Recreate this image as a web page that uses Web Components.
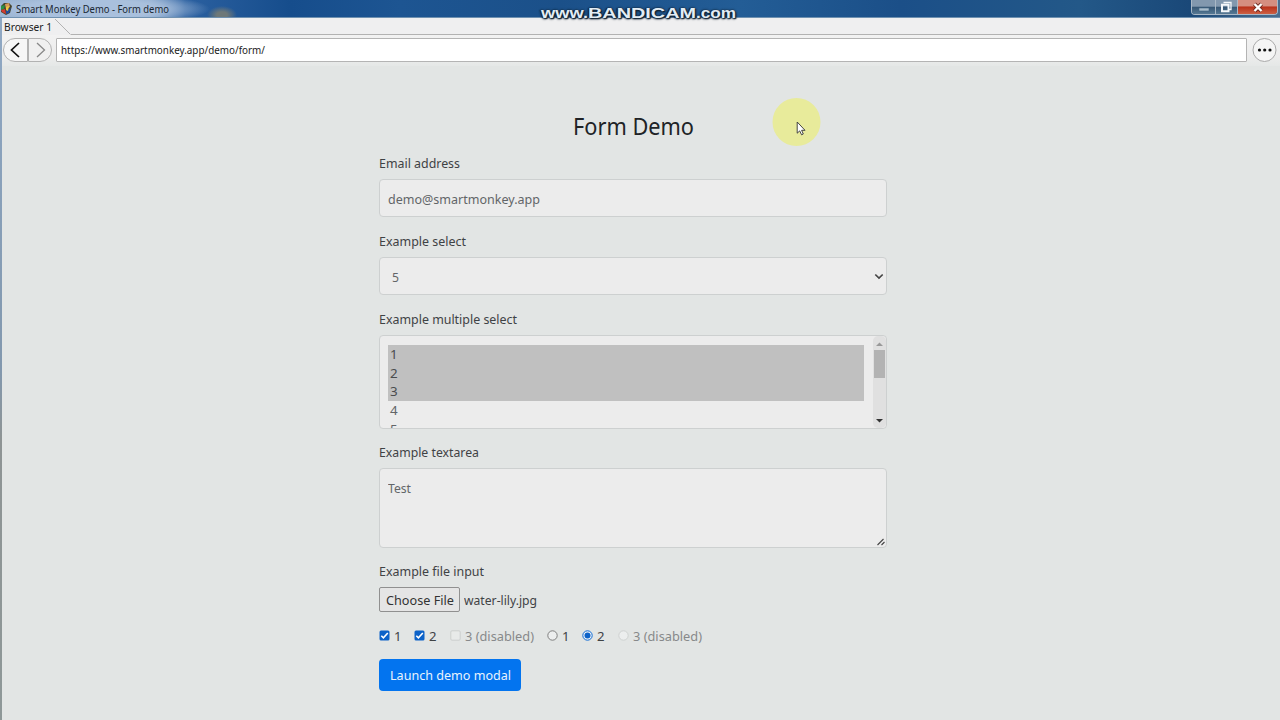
<!DOCTYPE html>
<html lang="en"><head><meta charset="utf-8"><title>Smart Monkey Demo - Form demo</title>
<style>html,body{margin:0;width:1280px;height:720px;overflow:hidden;background:#e2e5e4;font-family:"Noto Sans","Open Sans",sans-serif}</style>
</head><body><demo-window></demo-window>
<script>
const define=(name,html,setup)=>customElements.define(name,class extends HTMLElement{
  constructor(){super();this.attachShadow({mode:'open'}).innerHTML=html}
  connectedCallback(){if(setup)setup(this,this.shadowRoot)}
});
// A single line of text condensed or widened to the width given in "w".
define('fit-text',`<style>:host{display:inline-block;white-space:nowrap;flex:none}span{display:inline-block;transform-origin:0 50%}</style><span><slot></slot></span>`,(h,r)=>{
  const s=r.querySelector('span'),w=+h.getAttribute('w');
  h.style.width=w+'px';
  s.style.transform='scaleX('+w/s.getBoundingClientRect().width+')';
});
define('title-bar',`<style>
:host{display:flex;height:18px;box-sizing:border-box;border-bottom:1px solid #6f91b0;position:relative;overflow:visible;
background:radial-gradient(ellipse 15px 9px at 222px 15px,#6e7878 0 35%,#6e787800),radial-gradient(ellipse 120px 17px at 90px 9px,#a9c0dd 0 55%,#a9c0dd00),linear-gradient(90deg,#96b0cd 0,#88a6cb 150px,#2b60a0 185px,#164d8c 290px,#1d5592 400px,#1b5089 560px,#235d96 740px,#1b4f88 900px,#235888 1080px,#1a4878 1190px,#4b6e8e 1280px)}
.left{display:flex;align-items:center;height:17px;gap:4px;color:#1a2733;font-size:10.3px;line-height:17px;flex:1}
.left fit-text{padding-top:1px}
.btns{display:flex;height:15px;margin-right:2px;border:1px solid #a9b8c6;border-top:0;border-radius:0 0 4px 4px;overflow:hidden;box-sizing:border-box}
.b{display:flex;align-items:center;justify-content:center;background:linear-gradient(#8298ae 0 45%,#355674 50%,#577994);border-right:1px solid #a9b8c6}
.c{background:linear-gradient(#d58e80 0 42%,#ba321b 50%,#cc6044);border:0}
.wm{position:absolute;left:541px;top:3px;display:flex;align-items:baseline;font:bold 14px/20px "Liberation Sans",sans-serif;color:#e2edf5;text-shadow:0 0 2px #132536,1px 1px 1px #132536,-1px 0 1px #132536,0 1px 2px #132536}
.wm .big{font-size:15.5px}
</style>
<div class="left"><svg width="12" height="15" viewBox="0 0 12 15"><path d="M1 5 4 2 9 2 12 5 10 12 6 14 1 11Z" fill="#48442c"/><path d="M5 3 9 2 10 6 6 8Z" fill="#d69b57"/><path d="M1 5 5 4 4 8 1 9Z" fill="#299246"/><path d="M1 9 5 8 6 13 2 11Z" fill="#d33a31"/><path d="M6 9 11 7 9 12 6 13Z" fill="#214c9c"/><path d="M6 6 9 5 8 10 6 9Z" fill="#ecc843"/></svg><fit-text w="153">Smart Monkey Demo - Form demo</fit-text></div>
<div class="wm"><fit-text w="47">www.</fit-text><fit-text class="big" w="108">BANDICAM</fit-text><fit-text w="40">.com</fit-text></div>
<div class="btns"><div class="b" style="width:23px"><svg width="12" height="14"><rect x="1" y="8" width="10" height="3" fill="#a9bccb" stroke="#426483" stroke-width=".6"/></svg></div>
<div class="b" style="width:21px"><svg width="13" height="14" viewBox="0 0 13 14"><path d="M3.5 2.5h7.5v7h-2" fill="none" stroke="#f4f7fa" stroke-width="1.3"/><path d="M2 4.8h6.5v6.5h-6.5z" fill="none" stroke="#f4f7fa" stroke-width="2"/></svg></div>
<div class="b c" style="width:39px"><svg width="12" height="14" viewBox="0 0 12 14"><path d="M2.5 4 9.5 11M9.5 4 2.5 11" stroke="#6e2b21" stroke-width="4"/><path d="M2.5 4 9.5 11M9.5 4 2.5 11" stroke="#fff" stroke-width="2.4"/></svg></div></div>`);
define('tab-strip',`<style>:host{display:flex;height:17px;background:#efeff0;color:#202020;font-size:10.3px;line-height:18px}
fit-text{margin-left:2px}svg{margin-left:3px}.line{flex:1;border-bottom:1px solid #b2b2b2;height:16px}</style>
<fit-text w="48"><slot></slot></fit-text><svg width="16" height="17"><path d="M0 1 L15.5 16.5" stroke="#b2b2b2" fill="none"/></svg><div class="line"></div>`);
define('nav-bar',`<style>:host{display:flex;align-items:center;height:31px;padding:0 3px 1px 0;box-sizing:border-box;background:linear-gradient(#f2f2f2,#ececec 70%,#e5e8e7)}
.url{flex:1;height:24px;box-sizing:border-box;border:1px solid #b4b4b4;border-radius:1px;background:#fff;margin:0 5px 0 3px;padding-left:4px;font-size:10.4px;line-height:22px;color:#202020}svg{display:block;flex:none}</style>
<svg width="51" height="26" viewBox="0 0 51 26"><path d="M25.5 1.5H13a11.5 11.5 0 0 0 0 23H25.5Z" fill="#f6f6f6" stroke="#b2b2b2"/><path d="M26.5 1.5H38a11.5 11.5 0 0 1 0 23H26.5Z" fill="#f0f0f0" stroke="#b2b2b2"/><path d="M17 6 9.5 13 17 20" fill="none" stroke="#111" stroke-width="1.7"/><path d="M35 6 42.5 13 35 20" fill="none" stroke="#888" stroke-width="1.3"/></svg>
<div class="url"><fit-text w="204"><slot></slot></fit-text></div>
<svg width="25" height="26" viewBox="0 0 25 26"><circle cx="12.5" cy="13" r="11.5" fill="#f5f5f5" stroke="#aaa"/><g fill="#111"><circle cx="7.5" cy="13" r="1.6"/><circle cx="12.7" cy="13" r="1.6"/><circle cx="18" cy="13" r="1.6"/></g></svg>`);
define('form-group',`<style>:host{display:block;margin-bottom:12px}.l{height:24px;line-height:25px;font-size:13.4px;color:#3f4244;margin-bottom:4px;display:flex}</style><div class="l"><slot name="label"></slot></div><slot></slot>`);
define('form-box',`<style>:host{display:flex;box-sizing:border-box;width:508px;height:38px;border:1px solid #cdd0d0;border-radius:4px;background:#ececec;font-size:13.4px;color:#626568;overflow:hidden}</style><slot></slot>`);
define('option-list',`<style>:host{display:flex;width:100%}.o{width:476px;margin:9px 9px 0 8px;line-height:19.6px;flex:none}.s{background:#c0c0c0;color:#4a4c4e}.o div{height:18.66px;padding-left:2px}
.bar{width:13px;height:92px;background:#e0e0e0;border-radius:5px;display:flex;flex-direction:column;align-items:center}.th{width:11px;height:28px;background:#b3b3b3}svg{display:block}</style>
<div class="o"><div class="s">1</div><div class="s">2</div><div class="s">3</div><div>4</div><div>5</div></div>
<div class="bar"><svg width="13" height="14"><path d="M3 10h7L6.5 6.5Z" fill="#999"/></svg><div class="th"></div><svg width="13" height="50"><path d="M3 41h7L6.5 44.5Z" fill="#333"/></svg></div>`);
define('file-input',`<style>:host{display:flex;align-items:center;height:25px;font-size:13.4px;color:#3f4244;gap:4px}.b{box-sizing:border-box;width:81px;height:25px;border:1px solid #909090;border-radius:2px;background:#e5e5e5;padding-left:6px;line-height:25px;color:#333;display:flex}.n{height:25px;line-height:27px;display:flex}</style><div class="b"><fit-text w="68">Choose File</fit-text></div><div class="n"><fit-text w="73">water-lily.jpg</fit-text></div>`);
define('choice-box',`<style>:host{display:flex;align-items:center;height:24px;font-size:13.2px;line-height:24px;color:#3f4244;box-sizing:border-box}:host([off]){color:#87898a}svg{flex:none;margin-right:4px;margin-top:-1px}</style><svg width="11" height="11" viewBox="0 0 11 11"></svg><slot></slot>`,(h,r)=>{
  const t=h.getAttribute('kind'),on=h.hasAttribute('on'),c=h.hasAttribute('off')?'#cccfce':'#747474';
  r.querySelector('svg').innerHTML=t==='check'
   ?(on?'<rect x=".5" y=".5" width="10" height="10" rx="1.5" fill="#0c62c8"/><path d="M2.3 5.7 4.4 7.8 8.8 3" fill="none" stroke="#fff" stroke-width="1.6"/>':`<rect x=".8" y=".8" width="9.4" height="9.4" rx="1.2" fill="#e8eae9" stroke="${c}"/>`)
   :(on?'<circle cx="5.5" cy="5.5" r="4.7" fill="#f2f5f8" stroke="#0c69d4"/><circle cx="5.5" cy="5.5" r="3" fill="#0c62c8"/>':`<circle cx="5.5" cy="5.5" r="4.7" fill="#eceeee" stroke="${c}" stroke-width=".9"/>`);
});
define('mouse-spot',`<style>:host{display:block;position:absolute;left:772px;top:98px;width:48px;height:48px}svg{display:block}</style><svg width="49" height="48"><circle cx="24.5" cy="24" r="24" fill="#e8eb9b"/><path d="M25.2 24V35.2L27.7 32.9 29.6 36.8 31.3 36 29.6 32.3H33Z" fill="#fff" stroke="#333" stroke-width=".9"/></svg>`);
define('demo-form',`<style>:host{display:block;padding:45px 0 0 377px;width:508px}
h1{margin:0 0 10px;height:30px;line-height:30px;font-size:23px;font-weight:400;color:#202326;display:flex;justify-content:center}
.in{line-height:39px;margin-left:8px}.row{display:flex;height:24px}
.btn{display:flex;justify-content:center;width:142px;height:32px;margin-top:11px;border-radius:4px;background:#0374ef;color:#e9f3fd;font-size:13.4px;line-height:33px}</style>
<h1><fit-text w="121">Form Demo</fit-text></h1>
<form-group><fit-text slot="label" w="81">Email address</fit-text><form-box><fit-text class="in" w="152">demo@smartmonkey.app</fit-text></form-box></form-group>
<form-group><fit-text slot="label" w="87">Example select</fit-text><form-box style="justify-content:space-between"><fit-text class="in" style="margin-left:12px" w="7">5</fit-text><svg width="10" height="36" style="margin-right:2px"><path d="M1.3 16.5 5 20 8.7 16.5" fill="none" stroke="#444" stroke-width="1.7"/></svg></form-box></form-group>
<form-group><fit-text slot="label" w="138">Example multiple select</fit-text><form-box style="height:94px"><option-list></option-list></form-box></form-group>
<form-group style="margin-top:-1px"><fit-text slot="label" w="100">Example textarea</fit-text><form-box style="height:80px;justify-content:space-between"><fit-text class="in" w="23">Test</fit-text><svg width="9" height="78"><path d="M.5 76 6.5 70M4.5 76 7.5 73" stroke="#444" stroke-width="1.1"/></svg></form-box></form-group>
<form-group style="margin-top:-1px"><fit-text slot="label" w="105">Example file input</fit-text><file-input></file-input></form-group>
<div class="row"><choice-box kind="check" on style="width:35px"><span>1</span></choice-box><choice-box kind="check" on style="width:36px">2</choice-box><choice-box kind="check" off style="width:97px"><fit-text w="69">3 (disabled)</fit-text></choice-box><choice-box kind="radio" style="width:35px">1</choice-box><choice-box kind="radio" on style="width:36px">2</choice-box><choice-box kind="radio" off><fit-text w="69">3 (disabled)</fit-text></choice-box></div>
<div class="btn"><fit-text w="121">Launch demo modal</fit-text></div>`);
define('demo-window',`<style>:host{display:flex;flex-direction:column;width:1280px;height:720px;position:relative;overflow:hidden}title-bar{z-index:2;flex:none}.body{flex:1;border-left:2px solid;border-image:linear-gradient(#8fa8c4,#8298ae 50%,#8e9494 60%,#8e9898) 1;background:#e2e5e4}</style>
<title-bar></title-bar><div class="body"><tab-strip>Browser 1</tab-strip><nav-bar>https://www.smartmonkey.app/demo/form/</nav-bar><demo-form></demo-form></div><mouse-spot></mouse-spot>`);
</script></body></html>
